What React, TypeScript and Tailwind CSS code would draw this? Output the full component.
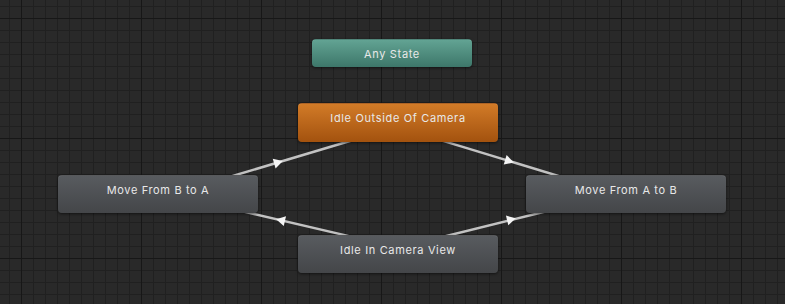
import React from 'react';

type Pt = [number, number];

const transitions: { from: Pt; to: Pt; arrow: Pt; dir: Pt }[] = [
  { from: [200, 185.7], to: [380, 132], arrow: [278, 162.5], dir: [1, -0.298] },
  { from: [420, 133.9], to: [600, 188.6], arrow: [509, 161], dir: [1, 0.3035] },
  { from: [220, 206], to: [380, 243.4], arrow: [281, 220.3], dir: [-1, -0.233] },
  { from: [420, 242.5], to: [580, 203], arrow: [511, 219.5], dir: [1, -0.247] },
];

const arrowPoints = (c: Pt, d: Pt) => {
  const len = Math.hypot(d[0], d[1]);
  const ux = d[0] / len;
  const uy = d[1] / len;
  const px = -uy;
  const py = ux;
  const tip = [c[0] + ux * 5, c[1] + uy * 5];
  const b1 = [c[0] - ux * 4 + px * 5, c[1] - uy * 4 + py * 5];
  const b2 = [c[0] - ux * 4 - px * 5, c[1] - uy * 4 - py * 5];
  return [tip, b1, b2].map((p) => p.join(',')).join(' ');
};

const Grid = () => {
  const minor: React.ReactNode[] = [];
  const major: React.ReactNode[] = [];
  for (let x = 9; x < 785; x += 12) {
    const isMajor = (x - 21) % 120 === 0;
    (isMajor ? major : minor).push(
      <line key={`v${x}`} x1={x + 0.5} y1={0} x2={x + 0.5} y2={304} />
    );
  }
  for (let y = 6; y < 304; y += 12) {
    const isMajor = (y - 18) % 120 === 0;
    (isMajor ? major : minor).push(
      <line key={`h${y}`} x1={0} y1={y + 0.5} x2={785} y2={y + 0.5} />
    );
  }
  return (
    <>
      <g stroke="#202020" strokeWidth={1}>{minor}</g>
      <g stroke="#171717" strokeWidth={1}>{major}</g>
    </>
  );
};

const nodeBase =
  'absolute flex justify-center rounded-[4px] text-[11px] leading-[14px] tracking-[0.65px] text-[#e8e8e8] shadow-[0_1px_3px_rgba(0,0,0,0.55)] border-t border-white/10';

const App = () => {
  return (
    <div
      className="relative w-[785px] h-[304px] overflow-hidden bg-[#292929]"
      style={{ fontFamily: 'Inter, "Noto Sans", sans-serif' }}
    >
      <svg className="absolute inset-0" width={785} height={304}>
        <Grid />
        {transitions.map((t, i) => (
          <line
            key={i}
            x1={t.from[0]}
            y1={t.from[1]}
            x2={t.to[0]}
            y2={t.to[1]}
            stroke="#c2c2c2"
            strokeWidth={2.5}
          />
        ))}
        {transitions.map((t, i) => (
          <polygon key={`a${i}`} points={arrowPoints(t.arrow, t.dir)} fill="#f4f4f4" />
        ))}
      </svg>

      <div
        className={`${nodeBase} left-[312px] top-[39px] w-[160px] h-[28px] items-center bg-gradient-to-b from-[#62a393] to-[#3d776a]`}
      >
        Any State
      </div>

      <div
        className={`${nodeBase} left-[298px] top-[103px] w-[200px] h-[39px] pt-[7px] bg-gradient-to-b from-[#d27b27] to-[#a3520e]`}
      >
        Idle Outside Of Camera
      </div>

      <div
        className={`${nodeBase} left-[58px] top-[175px] w-[200px] h-[38px] pt-[7px] bg-gradient-to-b from-[#585b5f] to-[#444649]`}
      >
        Move From B to A
      </div>

      <div
        className={`${nodeBase} left-[526px] top-[175px] w-[200px] h-[38px] pt-[7px] bg-gradient-to-b from-[#585b5f] to-[#444649]`}
      >
        Move From A to B
      </div>

      <div
        className={`${nodeBase} left-[298px] top-[235px] w-[200px] h-[38px] pt-[7px] bg-gradient-to-b from-[#585b5f] to-[#444649]`}
      >
        Idle In Camera View
      </div>
    </div>
  );
};

export default App;
